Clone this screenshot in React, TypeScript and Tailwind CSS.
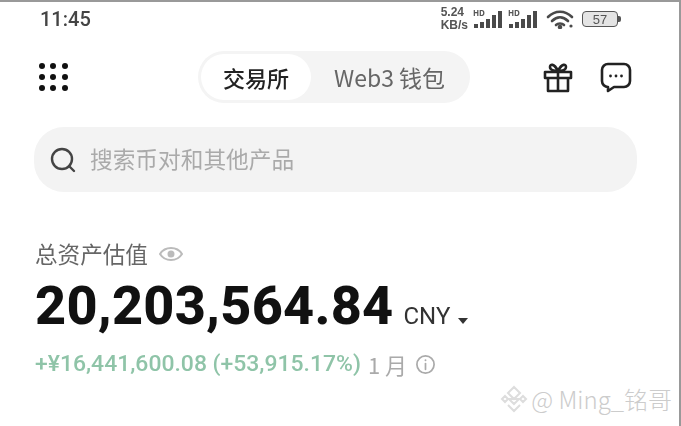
const cjk = "font-['Noto_Sans_CJK_SC','Noto_Sans',sans-serif]"

function Bars() {
  return (
    <div className="relative w-[32px] h-[20px] shrink-0">
      <span className="absolute left-0 top-0 text-[8px] leading-[8px] font-bold text-[#555]">HD</span>
      <svg viewBox="0 0 32 20" className="absolute inset-0 w-[32px] h-[20px]" fill="#4a4a4a">
        <rect x="1" y="15" width="4" height="4" />
        <rect x="7" y="13" width="4" height="6" />
        <rect x="13" y="10" width="4" height="9" />
        <rect x="19" y="6" width="4" height="13" />
        <rect x="25" y="2" width="4" height="17" />
      </svg>
    </div>
  )
}

function StatusBar() {
  return (
    <div className="flex items-center justify-between h-[34px] pl-[40px] pr-[58px]">
      <span className="text-[20px] leading-none text-[#444] font-['Roboto',sans-serif] font-medium">11:45</span>
      <div className="flex items-center gap-[3px]">
        <div className="flex flex-col text-[12px] leading-[13px] font-bold text-[#555] font-['Liberation_Sans',sans-serif] mr-[2px]">
          <span>5.24</span>
          <span>KB/s</span>
        </div>
        <Bars />
        <Bars />
        <svg viewBox="0 0 28 20" className="w-[28px] h-[20px] ml-[3px]" fill="none" stroke="#4a4a4a" strokeWidth="2.6" strokeLinecap="round">
          <path d="M2 8 C9 1 19 1 26 8" />
          <path d="M6 12 C11 7 17 7 22 12" />
          <path d="M10 16 C12 14 16 14 18 16" />
          <circle cx="14" cy="18" r="1" fill="#4a4a4a" />
          <circle cx="25" cy="17" r="1.6" fill="#4a4a4a" stroke="none" />
        </svg>
        <div className="flex items-center ml-[5px]">
          <div className="w-[36px] h-[16px] rounded-[4px] border-[1.5px] border-[#555] bg-[#e4e4e4] flex items-center justify-center text-[13px] leading-none text-[#555] font-['Liberation_Sans',sans-serif]">
            57
          </div>
          <div className="w-[3px] h-[6px] bg-[#555] rounded-r-[2px]" />
        </div>
      </div>
    </div>
  )
}

function GridIcon() {
  const dots = [0, 1, 2, 3, 4, 5, 6, 7, 8]
  return (
    <div className="grid grid-cols-3 gap-x-[5px] gap-y-[5px] w-[29px]">
      {dots.map((d) => (
        <span key={d} className="w-[6px] h-[6px] rounded-full bg-[#111]" />
      ))}
    </div>
  )
}

function NavBar() {
  return (
    <div className="flex items-center h-[82px] pl-[39px] pr-[47px]">
      <GridIcon />
      <div className="flex items-center h-[52px] ml-[130px] w-[272px] rounded-full bg-[#f4f4f4]">
        <div className={`flex items-center justify-center w-[110px] h-[46px] ml-[3px] rounded-full bg-white text-[22px] font-medium text-[#222] ${cjk}`}>
          交易所
        </div>
        <div className={`ml-[23px] text-[23px] text-[#666] whitespace-nowrap ${cjk}`}>Web3 钱包</div>
      </div>
      <svg viewBox="0 0 32 32" className="w-[32px] h-[32px] ml-[72px]" fill="none" stroke="#222" strokeWidth="2.6" strokeLinejoin="round">
        <path d="M3 11h26v6H3z" />
        <path d="M6 17v13h20V17" />
        <path d="M16 11v19" />
        <path d="M16 10c-4 0-8-1-8-4s4-4 8 4c4-8 8-7 8-4s-4 4-8 4z" />
      </svg>
      <svg viewBox="0 0 32 32" className="w-[32px] h-[32px] ml-[26px]" fill="none" stroke="#222" strokeWidth="2.6" strokeLinejoin="round">
        <path d="M8 3h16a6 6 0 0 1 6 6v11a6 6 0 0 1-6 6H14l-6 4v-4a6 6 0 0 1-6-6V9a6 6 0 0 1 6-6z" />
        <circle cx="10.5" cy="15" r="1.4" fill="#222" stroke="none" />
        <circle cx="16" cy="15" r="1.4" fill="#222" stroke="none" />
        <circle cx="21.5" cy="15" r="1.4" fill="#222" stroke="none" />
      </svg>
    </div>
  )
}

function SearchBar() {
  return (
    <div className="flex items-center h-[65px] mt-[9px] mx-[34px] w-[603px] rounded-[30px] bg-[#f3f3f3] pl-[15px]">
      <svg viewBox="0 0 28 28" className="w-[28px] h-[28px]" fill="none" stroke="#444" strokeWidth="2.4" strokeLinecap="round">
        <circle cx="13" cy="13" r="10" />
        <path d="M20 20l5 5" />
      </svg>
      <span className={`ml-[13px] text-[22.7px] text-[#aaa] ${cjk}`}>搜索币对和其他产品</span>
    </div>
  )
}

function Assets() {
  return (
    <div className="pl-[35px] mt-[47px]">
      <div className="flex items-center h-[30px]">
        <span className={`text-[22.6px] text-[#666] ${cjk}`}>总资产估值</span>
        <svg viewBox="0 0 24 16" className="w-[24px] h-[16px] ml-[11px]" fill="none" stroke="#bbb" strokeWidth="2">
          <path d="M1 8c5-8 17-8 22 0-5 8-17 8-22 0z" />
          <circle cx="12" cy="8" r="2.5" fill="#bbb" />
        </svg>
      </div>
      <div className="flex items-baseline h-[58px] mt-[8px]">
        <span className="text-[54px] leading-[58px] font-extrabold text-[#111] font-['Roboto',sans-serif] tracking-[0.25px]">20,203,564.84</span>
        <span className="ml-[10px] text-[24px] text-[#333] font-['Roboto',sans-serif]">CNY</span>
        <span className="ml-[8px] mb-[6px] w-0 h-0 border-x-[5px] border-x-transparent border-t-[6px] border-t-[#333]" />
      </div>
      <div className="flex items-center h-[30px] mt-[14px] whitespace-nowrap">
        <span className="text-[22.95px] font-medium text-[#8fc4a8] font-['Roboto',sans-serif]">+¥16,441,600.08 (+53,915.17%)</span>
        <span className={`ml-[7px] text-[22px] text-[#aaa] ${cjk}`}>1 月</span>
        <svg viewBox="0 0 22 22" className="w-[21px] h-[21px] ml-[8px]" fill="none" stroke="#aaa" strokeWidth="1.8" strokeLinecap="round">
          <circle cx="11" cy="11" r="9" />
          <path d="M11 10v6" />
          <circle cx="11" cy="6.5" r="1" fill="#aaa" stroke="none" />
        </svg>
      </div>
    </div>
  )
}

export default function App() {
  return (
    <div className="relative w-[681px] h-[426px] overflow-hidden bg-white border-t-[2px] border-r-[2px] border-[#999]">
      <div className="blur-[0.6px]">
        <StatusBar />
        <NavBar />
        <SearchBar />
        <Assets />
      </div>
      {/* watermark */}
      <div className="absolute right-[7px] bottom-[12px] flex items-center">
        <svg viewBox="0 0 28 28" className="w-[28px] h-[28px]" fill="none" stroke="#ddd" strokeWidth="2">
          <path d="M14 2l6 6-6 6-6-6zM5 11l3 3-3 3-3-3zM23 11l3 3-3 3-3-3zM14 14l5 0-5 5-5-5zM8 20l6 6 6-6" />
        </svg>
        <span className={`ml-[3px] text-[24px] leading-[30px] text-[#ccc] whitespace-nowrap font-light ${cjk}`}>@ Ming_铭哥</span>
      </div>
    </div>
  )
}
